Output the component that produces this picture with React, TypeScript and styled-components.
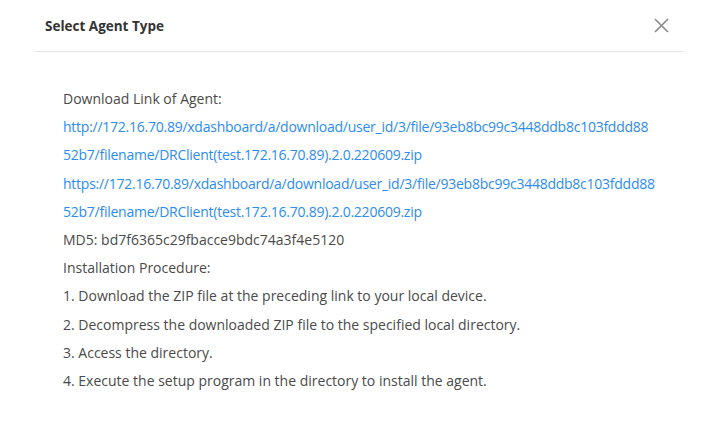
import React from "react";
import styled, { createGlobalStyle } from "styled-components";

const Global = createGlobalStyle`
  html, body { margin: 0; padding: 0; background: #ffffff; }
  body { font-family: "Open Sans", "Noto Sans", sans-serif; }
`;

const Page = styled.div`
  width: 717px;
  height: 438px;
  box-sizing: border-box;
  padding-left: 35px;
  background: #fff;
`;

const Modal = styled.div`
  width: 649px;
  display: flex;
  flex-direction: column;
`;

const Header = styled.div`
  height: 52px;
  box-sizing: border-box;
  display: flex;
  align-items: center;
  justify-content: space-between;
  padding: 0 15px 0 10px;
  border-bottom: 1.5px solid #e6e6e6;
`;

const Title = styled.h2`
  margin: 0;
  font-size: 13.5px;
  font-weight: 700;
  color: #333;
  font-family: "Open Sans", sans-serif;
`;

const Close = styled.button`
  border: 0;
  background: none;
  padding: 0;
  width: 15px;
  height: 15px;
  display: flex;
  align-items: center;
  justify-content: center;
  cursor: pointer;
`;

const Body = styled.div`
  padding: 33px 28px 0 28px;
  display: flex;
  flex-direction: column;
`;

const Line = styled.div`
  font-size: 14px;
  line-height: 28.2px;
  color: #4a4a4a;
`;

const Link = styled.a`
  display: block;
  font-size: 14px;
  line-height: 28.2px;
  color: #2d8cf0;
  text-decoration: none;
  letter-spacing: -0.25px;
`;

const Segment = styled.span`
  display: block;
  white-space: nowrap;
`;

const links = [
  [
    "http://172.16.70.89/xdashboard/a/download/user_id/3/file/93eb8bc99c3448ddb8c103fddd88",
    "52b7/filename/DRClient(test.172.16.70.89).2.0.220609.zip",
  ],
  [
    "https://172.16.70.89/xdashboard/a/download/user_id/3/file/93eb8bc99c3448ddb8c103fddd88",
    "52b7/filename/DRClient(test.172.16.70.89).2.0.220609.zip",
  ],
];

export default function App() {
  return (
    <>
      <Global />
      <Page>
        <Modal>
          <Header>
            <Title>Select Agent Type</Title>
            <Close aria-label="Close">
              <svg width="15" height="15" viewBox="0 0 15 15">
                <path d="M1 1L14 14M14 1L1 14" stroke="#8a8a8a" strokeWidth="1.6" />
              </svg>
            </Close>
          </Header>
          <Body>
            <Line>Download Link of Agent:</Line>
            {links.map((parts, i) => (
              <Link key={i} href={parts.join("")}>
                {parts.map((p, j) => (
                  <Segment key={j}>{p}</Segment>
                ))}
              </Link>
            ))}
            <Line>MD5: bd7f6365c29fbacce9bdc74a3f4e5120</Line>
            <Line>Installation Procedure:</Line>
            <Line>1. Download the ZIP file at the preceding link to your local device.</Line>
            <Line>2. Decompress the downloaded ZIP file to the specified local directory.</Line>
            <Line>3. Access the directory.</Line>
            <Line>4. Execute the setup program in the directory to install the agent.</Line>
          </Body>
        </Modal>
      </Page>
    </>
  );
}
